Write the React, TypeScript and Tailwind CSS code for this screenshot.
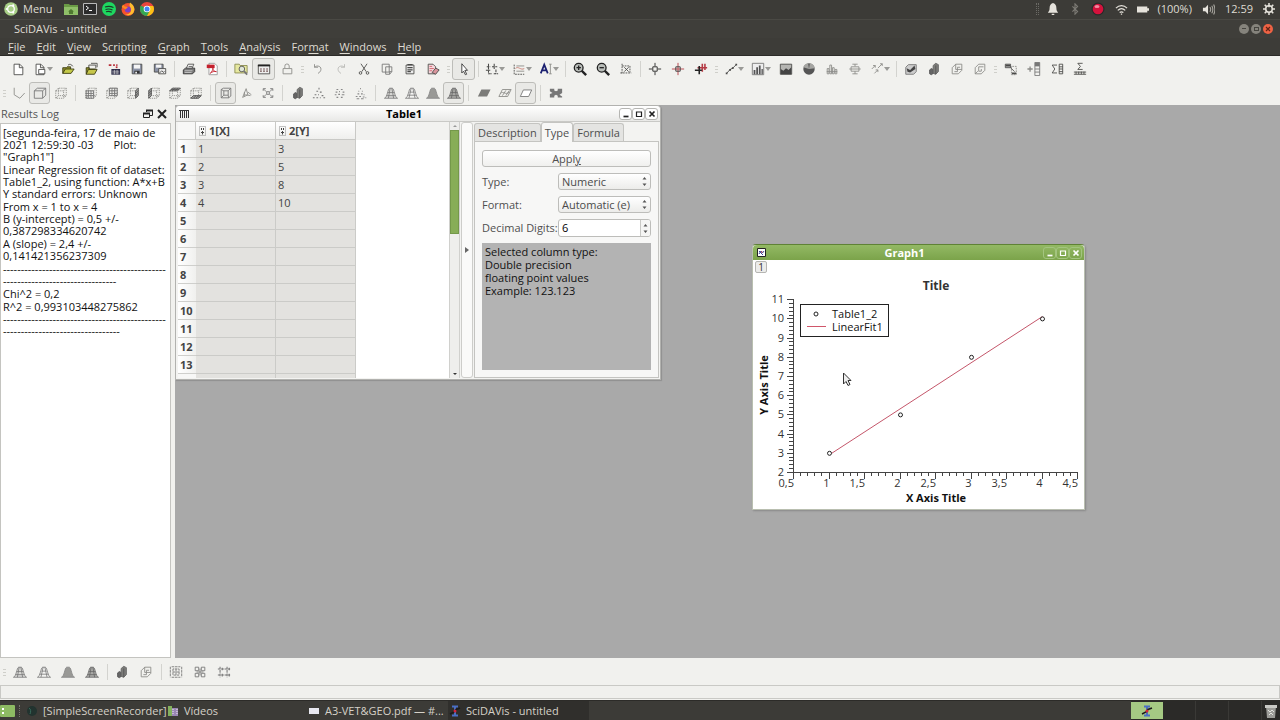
import type { ReactNode } from "react";

const K = "#4a4a48";
const G = "#8b8b88";

const bell = "M0.500 14C4 13 4 3.500 6.500 2.500H9.500C12 3.500 12 13 15.500 14Z";
const dashedCube = (
  <path d="M2 5.500L5 2.500H14V11L11 14H2ZM2 5.500H11V14M11 5.500L14 2.500M5 2.500V11H14M5 11L2 14" stroke={G} strokeDasharray="1.500 1" />
);

const icons: Record<string, ReactNode> = {
  file: <path d="M3.500 2.500H10L13.500 6V14.500H3.500ZM9.500 2.500V6.500H13.500" fill="#fff" stroke={K} />,
  newAspect: (
    <g fill="#fff" stroke={K}>
      <path d="M3.500 2.500H9L12.500 6V14.500H3.500ZM8.500 2.500V6.500H12.500" />
      <path d="M6.500 8.500H13.500V13.500H6.500Z" />
    </g>
  ),
  open: (
    <g>
      <path d="M2 13V6.500H6L7 5.500H11V8" fill="#8d8e2a" stroke="#3b3b14" />
      <path d="M2 13L5 8H15L11.500 13Z" fill="#c3c948" stroke="#3b3b14" />
      <path d="M8 3.500C10 2 12 2.500 13.500 5" stroke={K} />
    </g>
  ),
  openFiles: (
    <g>
      <path d="M5.500 7.500V3.500H13.500V7.500M8 1.500H15V6" stroke={K} />
      <path d="M2.500 14V6.500H6V8H13" fill="#8d8e2a" stroke="#3b3b14" />
      <path d="M2.500 14L5 8.500H15L12 14Z" fill="#c6c64a" stroke="#3b3b14" />
    </g>
  ),
  importIcon: (
    <g>
      <path d="M2 3.500H5M7 3.500H9M10.500 3.500H12" stroke="#b8303a" strokeWidth="2" />
      <path d="M11 5V7" stroke="#b8303a" strokeWidth="2" />
      <path d="M5 8H15V14.500H5Z" fill="#2c2c48" />
      <path d="M6 10.500H14M6 12.500H14M8.500 9V14M11.500 9V14" stroke="#ddd" strokeWidth="0.700" />
    </g>
  ),
  save: (
    <g>
      <path d="M2.500 2.500H13.500V13.500H2.500Z" fill="#8b92a5" stroke={K} />
      <path d="M4.500 3H11.500V7.500H4.500Z" fill="#f4f4f4" />
      <path d="M5 10H11V13H5Z" fill="#333" />
      <path d="M6 11H8V13H6Z" fill="#eee" />
    </g>
  ),
  saveAs: (
    <g>
      <path d="M1.500 2.500H11.500V11.500H1.500Z" fill="#8b92a5" stroke={K} />
      <path d="M3.500 3H9.500V6.500H3.500Z" fill="#f4f4f4" />
      <path d="M6.500 7.500H14.500V13.500H6.500Z" fill="#eee" stroke={K} />
      <path d="M7 13L10 10L12 12L13 10.500" stroke={K} />
    </g>
  ),
  print: (
    <g>
      <path d="M5 7L7 2.500H13.500L11.500 7" fill="#fff" stroke={K} />
      <path d="M7.500 5H11.500" stroke={K} />
      <path d="M1.500 9L4 7H14.500V11L12 13.500H1.500Z" fill="#777" stroke="#333" />
      <path d="M3 10H12M3 12H11" stroke="#ddd" strokeWidth="0.800" />
    </g>
  ),
  pdf: (
    <g>
      <path d="M4.500 1.500H11L14 4.500V14.500H4.500Z" fill="#fff" stroke="#999" />
      <path d="M2 3H11V7H2Z" fill="#c4212d" />
      <path d="M6 13C8 11 9 9 9 7C9 10 11 11 13 11C10.500 10.500 8 11 6 13Z" stroke="#c4212d" />
    </g>
  ),
  explorer: (
    <g>
      <path d="M1 2.500H6L7 4H15V12.500H1Z" fill="#e6e8a0" stroke="#8a8b50" />
      <circle cx="9" cy="8" r="3.200" fill="#dfe6d8" stroke="#555" />
      <path d="M11.500 10.500L15 14.500" stroke="#777" strokeWidth="2" />
    </g>
  ),
  log: (
    <g>
      <path d="M1.500 3.500H14.500V13.500H1.500Z" fill="#eee" stroke={K} />
      <path d="M1 4H15" stroke="#222" strokeWidth="2" />
      <path d="M3.500 8H5.500M7 8H9M10.500 8H12.500M3.500 10.500H5.500M7 10.500H9M10.500 10.500H12.500" stroke="#6a4a4a" strokeWidth="1.400" />
    </g>
  ),
  lock: <path d="M3.500 7.500H13.500V13.500H3.500ZM5.500 7V5A2.500 2.500 0 0 1 10.500 4.500V7" stroke={G} />,
  undo: <path d="M4 2.500V6H8M4 6C7 3 13 5 11 10C10.500 11.500 9 12.500 8 13" stroke={G} />,
  redo: <path d="M12 2.500V6H8M12 6C9 3 3 5 5 10C5.500 11.500 7 12.500 8 13" stroke="#b9b9b6" />,
  cut: (
    <g stroke={K}>
      <path d="M4.500 2L10.500 11M11.500 2L5.500 11" />
      <circle cx="4" cy="12.500" r="1.500" />
      <circle cx="12" cy="12.500" r="1.500" />
    </g>
  ),
  copy: <path d="M2.500 2.500H10.500V11.500H2.500ZM6.500 5.500H13.500V11L11 14H6.500ZM11 14V11H13.500" fill="#f2f2ee" stroke="#777" />,
  paste: (
    <g>
      <path d="M3.500 3.500H12.500V13.500H3.500Z" fill="#eee" stroke={K} />
      <path d="M5 3H11M5 6.500H11M5 9H11M5 11H9" stroke={K} strokeWidth="1.400" />
    </g>
  ),
  erase: (
    <g>
      <path d="M2.500 2.500H8L11 5.500V13.500H2.500Z" fill="#f5d9dd" stroke={K} />
      <path d="M4 5H7M4 7.500H9M4 10H7" stroke="#cf5b68" />
      <path d="M7 12L11 7L15 9L11 14Z" fill="#d9959d" stroke={K} />
    </g>
  ),
  pointer: <path d="M5.500 2L12 9.500H9L11 14L9.500 14.500L7.500 10.500L5.500 12.500Z" fill="#fff" stroke="#333" />,
  layout: <path d="M4 2V13.500H8M2 5.500H6M1 9.500H6M10.500 2V8M8 5.500H14M12.500 8.500V13.500M10 13.500H15" stroke={K} strokeWidth="1.200" strokeDasharray="3 0.700" />,
  curves: (
    <g>
      <path d="M2.500 3V14H14" stroke={K} strokeDasharray="2 1" />
      <path d="M5 4.500H14M5 10.500H14" stroke={G} />
      <path d="M4 7.500C7 4 10 10 14 7.500" stroke="#c5776c" />
    </g>
  ),
  text: (
    <g>
      <path d="M2 13L6 3L10 13M3.500 9.500H8.500" stroke="#1b2070" strokeWidth="2" />
      <path d="M11.500 2.500H14.500M13 2.500V13.500M11.500 13.500H14.500" stroke={G} />
    </g>
  ),
  zoomIn: (
    <g>
      <circle cx="6.500" cy="6.500" r="5" fill="#b9bdb9" stroke="#222" strokeWidth="1.500" />
      <path d="M4 6.500H9M6.500 4V9" stroke="#222" strokeWidth="1.500" />
      <path d="M10 10L15 15" stroke="#222" strokeWidth="2.800" />
    </g>
  ),
  zoomOut: (
    <g>
      <circle cx="6.500" cy="6.500" r="5" fill="#b9bdb9" stroke="#222" strokeWidth="1.500" />
      <path d="M4 6.500H9" stroke="#222" strokeWidth="1.500" />
      <path d="M10 10L15 15" stroke="#222" strokeWidth="2.800" />
    </g>
  ),
  rescale: (
    <g stroke={K}>
      <path d="M3.500 2V14M1.500 12.500H14M3.500 4.500H12.500V12" strokeDasharray="2 1" />
      <path d="M6 6L11 11M11 6L6 11" />
    </g>
  ),
  reader: <path d="M8 1V5M8 11V15M1 8H5M11 8H15M5.500 5.500H10.500V10.500H5.500Z" stroke="#222" />,
  dataCursor: (
    <g>
      <path d="M8 1V15M1 8H15" stroke="#b53a44" />
      <path d="M5.500 5.500H10.500V10.500H5.500Z" stroke="#333" />
    </g>
  ),
  range: (
    <g strokeWidth="1.800">
      <path d="M9.500 2V11M4 6.500H15M12.500 2V9" stroke="#b53a44" />
      <path d="M6 4.500V14M1 9.500H9" stroke="#222" />
    </g>
  ),
  scatter: (
    <g>
      <path d="M3 13L7 8.500L10 7L14 3" stroke={K} />
      <path d="M2 12H4V14H2ZM6 8H8V10H6ZM9 6H11V8H9ZM13 2H15V4H13Z" fill={K} />
    </g>
  ),
  bars: (
    <g>
      <path d="M1.500 1.500H14.500V14.500H1.500Z" fill="#eee" stroke="#777" />
      <path d="M3 9H5V14H3ZM6 6H8V14H6ZM9 4H11V14H9ZM12 8H13.500V14H12Z" fill="#555" />
    </g>
  ),
  area: (
    <g>
      <path d="M1.500 2.500H14.500V14H1.500Z" fill="#b5b5b2" stroke={K} />
      <path d="M2 14V8L5 10L8 7L11 9L14 6V14Z" fill="#444" />
    </g>
  ),
  pie: (
    <g>
      <circle cx="8" cy="8" r="6.500" fill="#555" />
      <path d="M8 8L9 1.500A6.500 6.500 0 0 1 14.500 7ZM8 8L1.500 6A6.500 6.500 0 0 1 7 1.500Z" fill="#a5a5a2" />
    </g>
  ),
  histogram: <path d="M2.500 13.500V7.500H4.500V13.500ZM5.500 13.500V3.500H7.500V13.500ZM8.500 13.500V6.500H10.500V13.500ZM11.500 13.500V8.500H13.500V13.500ZM2 11H14" stroke={G} />,
  box: <path d="M5 2.500H11M8 2.500V5M3.500 5.500H12.500V10.500H3.500ZM1.500 8H14.500M8 10.500V13.500M5 13.500H11" stroke={G} />,
  vectors: <path d="M2 8L6 4M3.500 4H6V6.500M5 13L9 9M6.500 9H9V11.500M9 7L14 2M11.500 2H14V4.500" stroke={G} />,
  ribbon: (
    <g>
      <path d="M2 6L5 3H14V11L11 14H2Z" fill="#ccc" stroke="#777" />
      <path d="M3 7L7 9L12 4L13 8L7 12L4 11Z" fill="#444" />
    </g>
  ),
  bars3d: (
    <g>
      <path d="M3 9L5 7.500L7 8.500V13L5 14.500L3 13.500Z" fill="#666" stroke="#555" />
      <path d="M7 4L10 1.500L13 3V11L10 14L7 13Z" fill="#7c7c79" stroke="#666" />
      <path d="M10 4V14" stroke="#555" />
    </g>
  ),
  scatter3d: <path d="M2.500 6.500L6.500 2.500H13.500V9.500L9.500 13.500H2.500ZM6.500 2.500V8.500H13.500M5 11H8.500V6H11.500" stroke={G} />,
  traj3d: <path d="M2.500 6.500L6.500 2.500H13.500V9.500L9.500 13.500H2.500ZM6.500 5.500H12M6.500 5.500V10.500H9.500V8M2.500 13.500L5.500 10.500" stroke={G} />,
  project: (
    <g>
      <path d="M1.500 2.500H7.500V6.500H1.500ZM7 6L12 11" fill="#ccc" stroke={K} />
      <path d="M8.500 5V14.500H14V5Z" stroke={G} strokeDasharray="2 1" />
      <path d="M2 4H7M9 13H14" stroke={K} strokeWidth="2" />
    </g>
  ),
  addColumn: (
    <g>
      <path d="M0.500 8H6.500M3.500 5V11" stroke={G} strokeWidth="1.500" />
      <path d="M9 0.500H14.500V15.500H9ZM9 8H14.500M9 11.500H14.500" stroke="#777" />
      <path d="M9 0.500H14.500V5H9Z" fill="#777" />
    </g>
  ),
  colStats: (
    <g stroke={K}>
      <path d="M8 3.500H2.500L5.500 8L2.500 12.500H8" />
      <path d="M10.500 2.500H14.500V13.500H10.500ZM10.500 5.500H14.500M10.500 8H14.500M10.500 11H14.500" />
    </g>
  ),
  rowStats: <path d="M11 1.500H5.500L8.500 5L5.500 8.500H11M1 11.500H15M1 14H15M3.500 11V14M6.500 11V14M9.500 11V14M12.500 11V14" stroke={K} />,
  axes: <path d="M2.500 2V10L9 14L14.500 8" stroke={G} />,
  cube: <path d="M1.500 5.500L5 2.500H14.500V10.500L11 14H1.500ZM1.500 5.500H11V14M11 5.500L14.500 2.500" stroke="#777" />,
  noBox: dashedCube,
  gridF: <g>{dashedCube}<path d="M2 8.500H11M2 11H11M5 5.500V14M8 5.500V14M2.500 5.500H11V14H2.500Z" stroke="#777" /></g>,
  gridB: <g>{dashedCube}<path d="M5 5.500H14M5 8.500H14M8 2.500V11M11 2.500V11M5 2.500H14V11H5Z" stroke="#777" /></g>,
  gridR: <g>{dashedCube}<path d="M11 8.500L14 5.500M11 11L14 8M12.500 4V12.500M11 5.500V14L14 11V2.500Z" stroke="#555" /></g>,
  gridL: <g>{dashedCube}<path d="M2 8.500L5 5.500M2 11L5 8M3.500 4V12.500M2 5.500V14L5 11V2.500Z" stroke="#555" /></g>,
  gridC: <g>{dashedCube}<path d="M2 5.500H11L14 2.500H5ZM5 5.500L8 2.500M8 5.500L11 2.500M3.500 4H12.500" stroke="#555" /></g>,
  gridFl: <g>{dashedCube}<path d="M2 14H11L14 11H5ZM5 14L8 11M8 14L11 11M3.500 12.500H12.500" stroke="#555" /></g>,
  persp: <path d="M2.500 13.500V4L5 2.500H13.500V11.500L11 13.500ZM5.500 5.500H10.500V10.500H5.500ZM2.500 4L5.500 5.500M13.500 2.500L10.500 5.500M2.500 13.500L5.500 10.500M11 13.500L10.500 10.500" stroke="#777" />,
  resetRot: <path d="M7 3L9 10L3 13ZM6 10L12 11M9 7L13 10M5 7V12" stroke={G} />,
  fit: <path d="M2.500 5.500V3H5.500M10.500 3H13.500V5.500M13.500 10.500V13H10.500M5.500 13H2.500V10.500M3 3.500L6 6.500M13 3.500L10 6.500M3 12.500L6 9.500M13 12.500L10 9.500M6.500 6.500H9.500V9.500H6.500Z" stroke="#777" />,
  dots1: <path d="M8 2V4M5 6H7M9 7H11M3 10H5M7 10H8M11 11H13M1 13.500H3M5 13.500H7M9 13.500H10M13 13.500H15" stroke="#777" strokeWidth="1.200" />,
  dots2: <path d="M4 4H6M9 4H11M3 7H5M7 6.500H8M11 7H13M2 10H4M6 9.500H8M10 10H13M4 13H6M9 13H11" stroke="#888" strokeWidth="1.300" />,
  dots3: <path d="M7 3H8M5 6H6M9 6H10M4 9H6M8 9H10M11 10H12M2 12H4M6 12H8M10 12.500H12M13 13.500H14M3 14.500H6M8 14.500H11" stroke="#888" strokeWidth="1.200" />,
  mesh: <path d={bell + "M3 11H13M4.500 7.500H11.500M7 2.500L5 14M9 2.500L11 14"} fill="#d8d8d5" stroke="#777" strokeWidth="0.900" />,
  mesh2: <path d={bell + "M3 10.500H13M5 7H11M7 2.500L4.500 14M9 2.500L11.500 14"} fill="#f4f4f2" stroke="#777" strokeWidth="0.900" />,
  surf: <path d={bell} fill="#999996" stroke="#888" />,
  meshSurf: <path d={bell + "M3 11H13M4.500 7.500H11.500M7 2.500L5 14M9 2.500L11 14"} fill="#a9a9a6" stroke="#666" strokeWidth="0.900" />,
  floorData: <path d="M1 12L5 4H15.500L11.500 12Z" fill="#7b7b78" />,
  floorIso: <path d="M1 12L5 4H15L11 12ZM3 8.500C6 5 8 11 13 7M5 11L9 5M9 11L13 5" stroke={G} />,
  floorNone: <path d="M1.500 12L5 4.500H14.500L11 12Z" fill="#fff" stroke="#777" />,
  anim: <path d="M1 3H6V5L8 6L10 5V3H15V8L12 10L15 12V13H10V11L8 10L6 11V13H1V9L4 8L1 6Z" fill="#777" />,
  view1: <path d="M1.500 2V14M14.500 2V14M4.500 4.500V11.500H11.500V4.500ZM4.500 8H11.500M8 4.500V11.500M3 2H13M3 14H13" stroke="#777" strokeDasharray="3 0.800" />,
  view2: <path d="M2.500 2.500H6.500V6.500H2.500ZM9.500 2.500H13.500V6.500H9.500ZM2.500 9.500H6.500V13.500H2.500ZM9.500 9.500H13.500V13.500H9.500ZM8 4V12M4 8H12" stroke="#777" />,
  view3: <path d="M3.500 2V14M11.500 2V14M1 4.500H15M1 11.500H15M6 3V6M14 3V6M6 10V13M14 10V13" stroke="#777" strokeDasharray="3 0.800" strokeWidth="1.200" />,
};

function Icon({ name }: { name: string }) {
  return (
    <svg viewBox="0 0 16 16" fill="none" className="size-[14px] shrink-0" aria-hidden="true">
      {icons[name]}
    </svg>
  );
}

function Handle() {
  return (
    <span className="flex h-4 w-2 shrink-0 flex-col items-center justify-center gap-[2px]">
      <i className="h-px w-[3px] bg-[#cfcfca]" />
      <i className="h-px w-[3px] bg-[#cfcfca]" />
      <i className="h-px w-[3px] bg-[#cfcfca]" />
    </span>
  );
}

function Caret() {
  return <span className="h-0 w-0 border-x-[3px] border-t-4 border-x-transparent border-t-[#9a9a97]" />;
}

type Size = "main" | "plot" | "surface";
const buttonWidth: Record<Size, string> = { main: "w-[23px]", plot: "w-[21px]", surface: "w-6" };
const sepWidth: Record<Size, string> = { main: "w-[6px]", plot: "w-[9px]", surface: "w-[6px]" };

/* "|" draws a separator, ":" a grip; a trailing "+v" adds a menu arrow and "*" marks a pressed button. */
function Toolbar({ label, items, size }: { label: string; items: string[]; size: Size }) {
  return (
    <div role="toolbar" aria-label={label} className="flex h-6 items-center">
      {items.map((item, i) => {
        if (item === "|") {
          return (
            <span key={i} className={`flex shrink-0 justify-center ${sepWidth[size]}`}>
              <i className="h-4 w-px bg-[#d3d3cf]" />
            </span>
          );
        }
        if (item === ":") return <Handle key={i} />;
        const menu = item.endsWith("+v");
        const on = item.endsWith("*");
        const name = item.replace("+v", "").replace("*", "");
        return (
          <button
            key={i}
            type="button"
            aria-label={name}
            aria-pressed={on}
            className={`flex h-[22px] shrink-0 items-center justify-center rounded-[3px] border ${
              on ? "border-[#bdbdb9] bg-[#e9e9e6]" : "border-transparent"
            } ${menu ? "w-[27px]" : buttonWidth[size]}`}
          >
            <Icon name={name} />
            {menu && <Caret />}
          </button>
        );
      })}
    </div>
  );
}

const mainItems = [
  "file", "newAspect+v", "open", "openFiles", "importIcon", "save", "saveAs", "|", "print", "pdf", "|",
  "explorer", "log*", "lock", ":", "undo", "redo", "cut", "copy", "paste", "erase", ":", "pointer*", "|",
  "layout+v", "curves+v", "text+v", "|", "zoomIn", "zoomOut", "rescale", "|", "reader", "dataCursor", "range", ":",
  "scatter+v", "bars+v", "area", "pie", "histogram", "box", "vectors+v", "|", "ribbon", "bars3d", "scatter3d", "traj3d", ":",
  "project", "addColumn", "colStats", "rowStats",
];
const plotItems = [
  ":", "axes", "cube*", "noBox", "|", "gridF", "gridB", "gridR", "gridL", "gridC", "gridFl", "|",
  "persp*", "resetRot", "fit", "|", "bars3d", "dots1", "dots2", "dots3", "|", "mesh", "mesh2", "surf", "meshSurf*", "|",
  "floorData", "floorIso", "floorNone*", "|", "anim",
];
const surfaceItems = [":", "mesh", "mesh2", "surf", "meshSurf", "|", "bars3d", "scatter3d", "|", "view1", "view2", "view3"];

const menus: [string, string, string][] = [
  ["", "F", "ile"], ["", "E", "dit"], ["", "V", "iew"], ["Scripting", "", ""], ["", "G", "raph"],
  ["", "T", "ools"], ["", "A", "nalysis"], ["For", "m", "at"], ["", "W", "indows"], ["", "H", "elp"],
];

function Launchers() {
  return (
    <div className="flex items-center gap-[5px]">
      <button type="button" aria-label="Files">
        <svg viewBox="0 0 14 14" className="size-[14px]">
          <path d="M0 2H5L6 3H14V13H0Z" fill="#6a9a45" />
          <path d="M0 5H14V13H0Z" fill="#8fbf68" />
          <path d="M7 7L10 9.500H9V12H5V9.500H4Z" fill="#4f7a30" />
        </svg>
      </button>
      <button type="button" aria-label="Terminal">
        <svg viewBox="0 0 14 14" className="size-[14px]">
          <path d="M.5 1.500H13.500V12.500H.5Z" fill="#2b2b2b" stroke="#b9b9b9" />
          <path d="M3 4L5.500 6L3 8M6 8.500H9" stroke="#fff" fill="none" />
        </svg>
      </button>
      <button type="button" aria-label="Spotify">
        <svg viewBox="0 0 14 14" className="size-[14px]">
          <circle cx="7" cy="7" r="7" fill="#1ed760" />
          <path d="M3 5C6 4 9 4.300 11.500 5.500M3.500 7.500C6 6.700 8.500 7 10.500 8M4 9.800C6 9.200 8 9.400 9.800 10.300" stroke="#1b3b26" strokeWidth="1.200" fill="none" />
        </svg>
      </button>
      <button type="button" aria-label="Firefox">
        <svg viewBox="0 0 14 14" className="size-[14px]">
          <circle cx="7" cy="7.500" r="6.500" fill="#f4522d" />
          <path d="M9 .5C13 3 14.500 7 12.500 10.500C11 13 7 14 4 12.500C9 13 11 9 9.500 6C9 4.500 8 3.500 9 .5Z" fill="#ffbd2e" />
          <circle cx="6.800" cy="7.600" r="3" fill="#7b3fc4" />
          <path d="M.7 5L2 2.500L4 4.500L7 5L4.500 7.500Z" fill="#ff8a1f" />
        </svg>
      </button>
      <button type="button" aria-label="Chrome">
        <svg viewBox="0 0 14 14" className="size-[14px]">
          <circle cx="7" cy="7" r="7" fill="#e8453c" />
          <path d="M7 7L.9 3.500A7 7 0 0 0 7 14L10 8.500Z" fill="#34a853" />
          <path d="M7 4H13.300A7 7 0 0 1 7 14L10 8.500Z" fill="#fbc116" />
          <circle cx="7" cy="7" r="3.300" fill="#fff" />
          <circle cx="7" cy="7" r="2.500" fill="#4285f4" />
        </svg>
      </button>
    </div>
  );
}

function TopPanel() {
  return (
    <header className="flex h-[19px] shrink-0 items-center justify-between bg-[#3c3b37] pr-[5px] pb-px pl-1 text-[11px] text-[#dfdbd2]">
      <div className="flex items-center gap-[11px]">
        <button type="button" className="flex items-center gap-[5px]">
          <svg viewBox="0 0 14 14" className="size-[14px]">
            <circle cx="7" cy="7" r="6.800" fill="#a8cf87" />
            <circle cx="7" cy="7" r="3.300" fill="none" stroke="#fff" strokeWidth="1.300" />
            <circle cx="2.800" cy="7" r="1.100" fill="#fff" />
            <circle cx="9.200" cy="3.400" r="1.100" fill="#fff" />
            <circle cx="9.200" cy="10.600" r="1.100" fill="#fff" />
          </svg>
          Menu
        </button>
        <Launchers />
      </div>
      <div className="flex items-center">
        <span className="mr-[8px] h-3 w-[3px] border-x border-dotted border-[#6b6a65]" />
        <svg viewBox="0 0 14 14" className="mr-[10px] size-3" fill="#e6e3dc">
          <path d="M7 0C10 1 11 3 11 6.500C11 9 12 10 13 11.500H1C2 10 3 9 3 6.500C3 3 4 1 7 0ZM5.500 12.500H8.500V14H5.500Z" />
        </svg>
        <svg viewBox="0 0 14 14" className="mr-[10px] size-3" fill="none" stroke="#7d7b75" strokeWidth="1.300">
          <path d="M4 4L10 10L7 13V1L10 4L4 10" />
        </svg>
        <svg viewBox="0 0 14 14" className="mr-[10px] size-[14px]">
          <circle cx="7" cy="7" r="6.500" fill="#2a2a2a" />
          <circle cx="7" cy="7" r="5.300" fill="#d4123c" />
          <ellipse cx="6" cy="4.500" rx="2.500" ry="1.600" fill="#f08aa0" />
        </svg>
        <svg viewBox="0 0 14 14" className="mr-[9px] size-[13px]" fill="none" stroke="#e6e3dc" strokeWidth="1.300">
          <path d="M1 5.500C4.500 2 9.500 2 13 5.500M3 8C5.500 5.500 8.500 5.500 11 8M5 10.300C6.300 9.200 7.700 9.200 9 10.300M6.300 12H7.700" />
        </svg>
        <svg viewBox="0 0 14 14" className="mr-[8px] size-3" fill="#e6e3dc">
          <path d="M0 4H12V6H14V9H12V11H0Z" />
        </svg>
        <span>(100%)</span>
        <svg viewBox="0 0 14 14" className="mr-[10px] ml-[10px] size-[13px]" fill="none" stroke="#a5a39c" strokeWidth="1.200">
          <path d="M1 5H3.500L6.500 2V12L3.500 9H1Z" fill="#e6e3dc" stroke="none" />
          <path d="M8.500 4.500C9.500 6 9.500 8 8.500 9.500M10.500 3C12 5 12 9 10.500 11M12.500 1.500C14.300 5 14.300 9 12.500 12.500" />
        </svg>
        <time>12:59</time>
        <svg viewBox="0 0 14 14" className="ml-[10px] size-3" fill="none" stroke="#e6e3dc" strokeWidth="1.800">
          <circle cx="7" cy="7" r="3.800" />
          <path d="M7 0V5M0 7H3M11 7H14M7 11V14M2 2L4 4M12 2L10 4M2 12L4 10M12 12L10 10" />
        </svg>
      </div>
    </header>
  );
}

function TitleBar() {
  return (
    <div className="flex h-[19px] shrink-0 items-center justify-between border-t border-[#4a4944] bg-[#3f3e3a] pr-[7px] pb-px pl-[14px] text-[11px] text-[#dfdbd2]">
      <h1>SciDAVis - untitled</h1>
      <div className="flex gap-[2px]">
        <button type="button" aria-label="Minimize" className="flex size-[10px] items-center justify-center rounded-full bg-[#85837c]">
          <i className="h-px w-1 bg-[#45443f]" />
        </button>
        <button type="button" aria-label="Maximize" className="flex size-[10px] items-center justify-center rounded-full bg-[#85837c]">
          <i className="h-1 w-[5px] border border-[#45443f]" />
        </button>
        <button type="button" aria-label="Close" className="flex size-[10px] items-center justify-center rounded-full bg-[#ee6244]">
          <svg viewBox="0 0 6 6" className="size-[6px]" stroke="#5f2315" strokeWidth="1.200"><path d="M1 1L5 5M5 1L1 5" /></svg>
        </button>
      </div>
    </div>
  );
}

function MenuBar() {
  return (
    <nav className="flex h-[18px] shrink-0 items-center border-b border-[#2c2b28] bg-[#3d3c38] pl-[2px] text-[11px] text-[#dfdbd2]">
      {menus.map(([before, key, after]) => (
        <button key={before + key + after} type="button" className="pr-[5px] pl-[6px]">
          {before}<span className="underline underline-offset-2">{key}</span>{after}
        </button>
      ))}
    </nav>
  );
}

const log = [
  ["[segunda-feira, 17 de maio de", "2021 12:59:30 -03       Plot:", "\"Graph1\"]"],
  ["Linear Regression fit of dataset:", "Table1_2, using function: A*x+B", "Y standard errors: Unknown"],
  ["From x = 1 to x = 4", "B (y-intercept) = 0,5 +/-", "0,387298334620742"],
  ["A (slope) = 2,4 +/-", "0,141421356237309"],
  ["-".repeat(46), "-".repeat(32)],
  ["Chi^2 = 0,2"],
  ["R^2 = 0,993103448275862", "-".repeat(46), "-".repeat(33)],
];

function ResultsLog() {
  return (
    <aside className="flex w-[171px] shrink-0 flex-col text-[11px]">
      <div className="flex h-[18px] items-center justify-between pr-1 pl-px text-[#555]">
        <h2>Results Log</h2>
        <div className="flex gap-1">
          <button type="button" aria-label="Float">
            <svg viewBox="0 0 10 10" className="size-[10px]" fill="none" stroke="#222">
              <path d="M3.500 3V1.500H9.500V6.500H7M.5 4.500H6.500V8.500H.5Z" /><path d="M3 1.500H10M0 4.500H7" strokeWidth="2" />
            </svg>
          </button>
          <button type="button" aria-label="Close log">
            <svg viewBox="0 0 10 10" className="size-[10px]" stroke="#222" strokeWidth="2"><path d="M1 1L9 9M9 1L1 9" /></svg>
          </button>
        </div>
      </div>
      <div className="flex flex-1 flex-col gap-px overflow-hidden border border-[#c4c4c0] bg-white pt-[3px] pl-[2px] leading-3 whitespace-pre text-[#111]">
        {log.map((lines, i) => <p key={i}>{lines.join("\n")}</p>)}
      </div>
    </aside>
  );
}

function WindowButtons({ light }: { light?: boolean }) {
  const cls = `flex h-3 w-[13px] items-center justify-center rounded-[3px] border ${light ? "border-[#a3c47f] text-white" : "border-[#b5b5b2] bg-white text-[#222]"}`;
  const shapes = ["M1.500 6.500H6.500", "M1.500 2H6.500V6.500H1.500Z", "M1.500 1.500L6.500 6.500M6.500 1.500L1.500 6.500"];
  return (
    <div className="flex shrink-0 pr-[2px]">
      {["Minimize window", "Maximize window", "Close window"].map((name, i) => (
        <button key={name} type="button" aria-label={name} className={cls}>
          <svg viewBox="0 0 8 8" className="size-2" fill="none" stroke="currentColor" strokeWidth={i === 1 ? 1.2 : 1.7}><path d={shapes[i]} /></svg>
        </button>
      ))}
    </div>
  );
}

const rows = [["1", "3"], ["2", "5"], ["3", "8"], ["4", "10"], ...Array.from({ length: 9 }, () => ["", ""])];

function ColumnHead({ name }: { name: string }) {
  return (
    <th scope="col" className="h-[18px] w-20 border-r border-b border-[#c9c9c6] bg-gradient-to-b from-white to-[#efefed] p-0">
      <span className="flex items-center gap-[3px] pl-[3px]">
        <svg viewBox="0 0 7 10" className="h-[10px] w-[7px]" fill="none" stroke="#888">
          <path d="M.5 .5H6.500V9.500H.5Z" strokeDasharray="1 1" /><path d="M2.500 2V4M4.500 2V4M2 6.500H5M3.500 5V8.500" stroke="#444" />
        </svg>
        {name}
      </span>
    </th>
  );
}

function TableWindow() {
  return (
    <section aria-label="Table1" className="absolute top-0 left-0 flex h-[275px] w-[486px] flex-col rounded-t border border-[#b2b2af] bg-[#f3f3f1] shadow-[1px_1px_1px_#8f8f8f]">
      <div className="flex h-[15px] shrink-0 items-center rounded-t bg-gradient-to-b from-white to-[#e9e9e7] pl-[3px]">
        <svg viewBox="0 0 10 8" className="h-2 w-[10px]" fill="none" stroke="#333">
          <path d="M0 .5H10M1.500 0V8M3.500 0V8M5.500 0V8M7.500 0V8M9.500 0V8" />
        </svg>
        <h2 className="flex-1 text-center text-[11px] font-bold text-black">Table1</h2>
        <WindowButtons />
      </div>
      <div className="flex min-h-0 flex-1 border-t border-[#c9c9c6] pr-px pb-px pl-[2px]">
        <div className="w-[271px] shrink-0 overflow-hidden bg-white">
          <div className="bg-[linear-gradient(#f2f2f0_18px,transparent_18px)]">
            <table className="w-[178px] table-fixed border-separate border-spacing-0 text-[11px] leading-3 text-[#444]">
              <thead>
                <tr className="text-left font-bold">
                  <td className="h-[18px] w-[18px] border-r border-b border-[#c9c9c6] bg-[#f7f7f6] p-0" />
                  <ColumnHead name="1[X]" />
                  <ColumnHead name="2[Y]" />
                </tr>
              </thead>
              <tbody>
                {rows.map(([x, y], i) => (
                  <tr key={i}>
                    <th scope="row" className="h-[18px] border-b border-[#cfcfcc] bg-gradient-to-r from-white to-[#f0f0ee] p-0 pl-[2px] text-left font-bold">{i + 1}</th>
                    <td className="h-[18px] border-r border-b border-[#cbcbc8] bg-[#e3e2df] p-0 pl-[2px]">{x}</td>
                    <td className="h-[18px] border-r border-b border-[#cbcbc8] bg-[#e3e2df] p-0 pl-[2px]">{y}</td>
                  </tr>
                ))}
                <tr>
                  <td className="h-[18px] bg-[#f7f7f6] p-0" />
                  <td className="border-r border-[#cbcbc8] bg-[#e3e2df] p-0" />
                  <td className="border-r border-[#cbcbc8] bg-[#e3e2df] p-0" />
                </tr>
              </tbody>
            </table>
          </div>
        </div>
        <div className="flex w-[11px] shrink-0 flex-col items-center border-x border-[#d0d0cd] bg-[#eeeeec]">
          <span className="flex h-2 items-center"><i className="border-x-2 border-b-2 border-x-transparent border-b-[#999]" /></span>
          <span className="h-[104px] w-full border border-[#74984a] bg-[#87ad57]" />
          <span className="mt-auto flex h-2 items-center"><i className="border-x-2 border-t-2 border-x-transparent border-t-[#333]" /></span>
        </div>
        <button type="button" aria-label="Toggle column panel" className="mx-px flex w-[12px] shrink-0 items-center justify-center rounded-[3px] border border-[#cdcdca] bg-[#fafaf9]">
          <i className="border-y-[3px] border-l-4 border-y-transparent border-l-[#666]" />
        </button>
        <ColumnPanel />
      </div>
    </section>
  );
}

function Arrows() {
  return (
    <svg viewBox="0 0 5 9" className="h-[9px] w-[5px]" fill="#555"><path d="M2.500 0L4.500 2.500H.5ZM2.500 9L4.500 6.500H.5Z" /></svg>
  );
}

function Pick({ id, value }: { id: string; value: string }) {
  return (
    <div className="relative flex">
      <select id={id} defaultValue={value} className="h-[17px] w-full appearance-none rounded-[3px] border border-[#bdbdba] bg-gradient-to-b from-white to-[#ececea] pl-[3px] text-[11px] leading-3 text-[#4a4a4a]">
        <option>{value}</option>
      </select>
      <span className="pointer-events-none absolute inset-y-0 right-1 flex items-center"><Arrows /></span>
    </div>
  );
}

function ColumnPanel() {
  return (
    <div className="flex min-w-0 flex-1 flex-col text-[11px] text-[#4f4f4f]">
      <div role="tablist" className="flex h-[19px] items-end">
        <button type="button" role="tab" aria-selected="false" className="h-[18px] rounded-t-[3px] border border-b-0 border-[#c4c4c1] bg-[#e4e4e2] px-[3px] leading-4">Description</button>
        <button type="button" role="tab" aria-selected="true" className="z-10 -mb-px h-5 rounded-t-[3px] border border-b-0 border-[#c4c4c1] bg-[#f7f7f6] px-[3px] leading-4">Type</button>
        <button type="button" role="tab" aria-selected="false" className="h-[18px] rounded-t-[3px] border border-b-0 border-[#c4c4c1] bg-[#e4e4e2] px-[3px] leading-4">Formula</button>
      </div>
      <div className="flex min-h-0 flex-1 flex-col gap-[6px] border border-[#c4c4c1] bg-[#f7f7f6] px-[7px] pt-2 pb-[7px]">
        <button type="button" className="h-[17px] shrink-0 rounded-[3px] border border-[#bdbdba] bg-gradient-to-b from-white to-[#f0f0ee] leading-3">
          Appl<span className="underline">y</span>
        </button>
        <div className="grid grid-cols-[1fr_93px] items-center gap-y-[6px]">
          <label htmlFor="type">Type:</label>
          <Pick id="type" value="Numeric" />
          <label htmlFor="format">Format:</label>
          <Pick id="format" value="Automatic (e)" />
          <label htmlFor="digits" className="whitespace-nowrap">Decimal Digits:</label>
          <div className="flex h-[18px] overflow-hidden rounded-[3px] border border-[#bdbdba] bg-white">
            <input id="digits" type="text" defaultValue="6" className="w-0 flex-1 pl-[3px] text-[11px] text-black outline-none" />
            <span className="flex w-[10px] items-center justify-center border-l border-[#c9c9c6] bg-[#f5f5f4]"><Arrows /></span>
          </div>
        </div>
        <p className="min-h-0 flex-1 bg-[#b3b3b3] px-[3px] pt-[2px] leading-[13px] whitespace-pre-line text-[#111]">
          {"Selected column type:\nDouble precision\nfloating point values\nExample: 123.123"}
        </p>
      </div>
    </div>
  );
}

const points = [[1, 3], [2, 5], [3, 8], [4, 10]];
const px = (x: number) => 41 + (x - 0.5) * 71;
const py = (y: number) => 212 - (y - 2) * 19.2;

function Plot() {
  const xTicks = Array.from({ length: 41 }, (_, i) => i);
  const yTicks = Array.from({ length: 46 }, (_, i) => i);
  return (
    <svg viewBox="0 0 331 249" className="block w-full" role="img" aria-label="Linear fit of Table1_2">
      <g stroke="#444" shapeRendering="crispEdges">
        <path d="M40.500 39V212.500H325" fill="none" />
        {xTicks.map((i) => {
          const x = Math.round(px(0.5 + i / 10)) - 0.5;
          return <line key={i} x1={x} x2={x} y1="212" y2={i % 5 ? 216 : 219} />;
        })}
        {yTicks.map((i) => {
          const y = Math.round(py(2 + i / 5)) + 0.5;
          return <line key={i} y1={y} y2={y} x1={i % 5 ? 36 : 34} x2="40" />;
        })}
      </g>
      <g fontSize="11" fill="#333" textAnchor="end">
        {["0,5", "1", "1,5", "2", "2,5", "3", "3,5", "4", "4,5"].map((t, i) => (
          <text key={t} x={px(0.5 + i / 2)} y="227">{t}</text>
        ))}
        {Array.from({ length: 10 }, (_, i) => i + 2).map((v) => (
          <text key={v} x="31" y={py(v) + 4}>{v}</text>
        ))}
      </g>
      <g fontSize="11" fontWeight="bold" fill="#111" textAnchor="middle">
        <text x="183" y="30" fontSize="12" fill="#333">Title</text>
        <text x="183" y="242">X Axis Title</text>
        <text transform="translate(15 125) rotate(-90)">Y Axis Title</text>
      </g>
      <line x1={px(1)} y1={py(2.9)} x2={px(4)} y2={py(10.1)} stroke="#c4566a" />
      <g fill="#fff" stroke="#222">
        {points.map(([x, y]) => <circle key={x} cx={px(x)} cy={py(y) + 0.5} r="2" />)}
      </g>
      <rect x="47.500" y="44.500" width="88" height="32" fill="#fff" stroke="#222" />
      <circle cx="63" cy="54" r="2" fill="#fff" stroke="#222" />
      <path d="M54 66.500H73" stroke="#d0566a" />
      <g fontSize="11" fill="#111">
        <text x="79" y="58">Table1_2</text>
        <text x="79" y="71">LinearFit1</text>
      </g>
      <path d="M90.500 113V124L93 121.500L95 125.500L97 124.500L95 120.500H98Z" fill="#eee" stroke="#333" />
    </svg>
  );
}

function GraphWindow() {
  return (
    <section aria-label="Graph1" className="absolute top-[139px] left-[577px] w-[333px] rounded-t border border-[#b9bfb0] border-t-[#5f8236] bg-white shadow-[1px_1px_2px_#8a8a8a]">
      <div className="flex h-[15px] items-center rounded-t bg-gradient-to-b from-[#93b964] to-[#7ba34a] pl-1">
        <svg viewBox="0 0 9 9" className="size-[9px]"><path d="M.5 .5H8.500V8.500H.5Z" fill="#fff" stroke="#222" /><path d="M2 6L4 3L5.500 5L7 3M2 3L4 5L6 7" stroke="#3b4c9c" fill="none" /><path d="M4 4H5.500" stroke="#c33" /></svg>
        <h2 className="flex-1 text-center text-[11px] font-bold text-white">Graph1</h2>
        <WindowButtons light />
      </div>
      <div className="relative">
        <Plot />
        <button type="button" className="absolute top-px left-[2px] h-3 w-3 rounded-[2px] border border-[#b5b5b2] bg-[#ececea] text-center text-[10px] leading-[10px] text-[#333]">1</button>
      </div>
    </section>
  );
}

function SciIcon() {
  return (
    <svg viewBox="0 0 12 12" className="size-3 shrink-0" fill="none">
      <path d="M3 1.500H9M3 10.500H9M6 1V11" stroke="#4a6fc4" strokeWidth="2" />
      <path d="M1 9L5 7L7 4.500L11 3" stroke="#1a1a1a" strokeWidth="1.500" /><circle cx="6" cy="6" r="1.500" fill="#d4233a" />
    </svg>
  );
}

function TaskBar() {
  const tasks: [string, ReactNode][] = [
    ["[SimpleScreenRecorder]", <svg key="r" viewBox="0 0 12 12" className="size-3 shrink-0"><circle cx="6" cy="6" r="5" fill="#22332f" /><path d="M3 3C5 4 5 7 4 9" stroke="#37695a" fill="none" /></svg>],
    ["Vídeos", <svg key="v" viewBox="0 0 12 12" className="size-3 shrink-0"><path d="M1 1H5V11H1Z" fill="#83b05e" /><path d="M5 3H11V11H5Z" fill="#9a86b4" /><path d="M6 4V10M10 4V10" stroke="#eee" strokeDasharray="1 1" /></svg>],
    ["A3-VET&GEO.pdf — #...", <svg key="p" viewBox="0 0 12 12" className="size-3 shrink-0"><path d="M1 3H11V9H1Z" fill="#e8e8f0" /></svg>],
    ["SciDAVis - untitled", <SciIcon key="s" />],
  ];
  return (
    <footer className="flex h-5 shrink-0 items-center border-t border-[#2c2b28] bg-[#3c3b37] text-[11px] text-[#d5d1c8]">
      <button type="button" aria-label="Show desktop" className="flex h-3 w-[15px] flex-col justify-center gap-[2px] rounded-[1px] bg-[#8dbb63] pl-[2px]">
        <i className="size-[2px] bg-white" /><i className="size-[2px] bg-white" />
      </button>
      <span className="mr-[5px] ml-1 h-3 w-px border-l border-dotted border-[#77756f]" />
      {tasks.map(([name, icon], i) => (
        <button key={name} type="button" className={`flex h-full w-[141px] items-center gap-[5px] pl-px whitespace-nowrap ${i === 3 ? "bg-[#302f2c]" : ""}`}>
          {icon}{name}
        </button>
      ))}
      <div className="ml-auto flex h-full items-center bg-[#2b2a28]">
        <button type="button" aria-label="Workspace 1" className="flex h-[17px] w-8 items-center justify-center bg-[#a5c983]"><SciIcon /></button>
        {[2, 3, 4].map((n) => <button key={n} type="button" aria-label={`Workspace ${n}`} className="h-full w-[33px] border-r border-[#3a3936]" />)}
        <button type="button" aria-label="Trash" className="flex h-full w-[18px] items-center justify-center">
          <svg viewBox="0 0 14 14" className="size-[14px]"><path d="M2 2H12L11 14H3Z" fill="#9c9c98" /><path d="M1 1H13V4H1Z" fill="#c9c9c5" /><path d="M4 6L6 8L8 6L10 8M5 11L7 9L9 11" stroke="#e4e4e0" fill="none" /></svg>
        </button>
      </div>
    </footer>
  );
}

export default function App() {
  return (
    <div className="flex h-screen flex-col overflow-hidden bg-[#f1f1ee] font-['Open_Sans','Noto_Sans',sans-serif] leading-4">
      <TopPanel />
      <TitleBar />
      <MenuBar />
      <div className="shrink-0 pt-px">
        <div className="pl-[6px]"><Toolbar label="Main" items={mainItems} size="main" /></div>
        <Toolbar label="3D plot" items={plotItems} size="plot" />
      </div>
      <main className="flex min-h-0 flex-1 gap-1">
        <ResultsLog />
        <div className="relative min-w-0 flex-1 overflow-hidden bg-[#a9a9a9]">
          <TableWindow />
          <GraphWindow />
        </div>
      </main>
      <div className="shrink-0 pt-[2px] pb-px"><Toolbar label="Surface" items={surfaceItems} size="surface" /></div>
      <div role="status" className="mb-px h-[14px] shrink-0 border border-[#c9c9c5] bg-[#f0f0ed]" />
      <TaskBar />
    </div>
  );
}
